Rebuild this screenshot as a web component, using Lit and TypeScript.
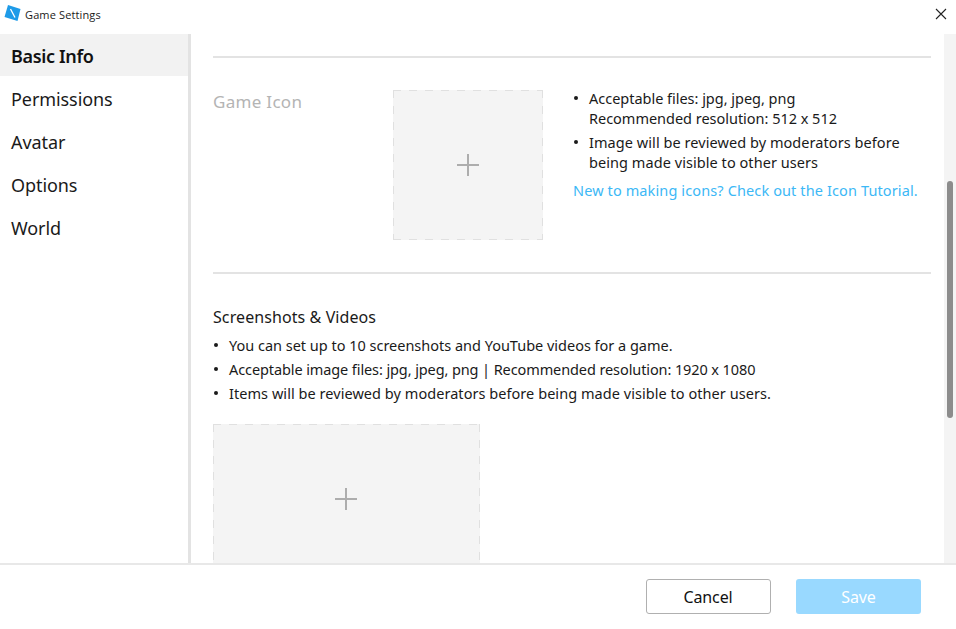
import { LitElement, html, css } from "lit";
import { customElement } from "lit/decorators.js";

const plus = html`<svg class="plus" width="22" height="22" viewBox="0 0 22 22"><path d="M0 10h22v2H0zM10 0h2v22h-2z" fill="#adadad"/></svg>`;

@customElement("app-root")
export class AppRoot extends LitElement {
  static styles = css`
    :host { display: block; width: 956px; height: 629px; background: #fff; overflow: hidden; font-family: "Noto Sans", "Open Sans", sans-serif; color: #1a1a1a; }
    .window { display: flex; flex-direction: column; height: 629px; }
    .titlebar { height: 34px; flex: none; display: flex; align-items: center; padding: 0 9px 5px 4px; box-sizing: border-box; }
    .logo { width: 17px; height: 17px; flex: none; margin-bottom: 2px; }
    .title { font-size: 11px; margin-left: 4px; flex: 1; font-family: "Open Sans", sans-serif; letter-spacing: 0.13px; }
    .close { width: 12px; height: 12px; display: block; margin-bottom: 1px; }
    .body { flex: 1; display: flex; min-height: 0; }
    .side { width: 191px; flex: none; box-sizing: border-box; border-right: 3px solid #e3e3e3; }
    .nav { height: 43px; box-sizing: border-box; display: flex; align-items: center; padding: 2px 0 0 11px; font-size: 18px; letter-spacing: -0.08px; }
    .nav.sel { background: #f2f2f2; font-weight: 600; height: 42px; color: #111; letter-spacing: -0.35px; }
    .main { flex: 1; padding: 22px 13px 0 22px; overflow: hidden; min-width: 0; }
    .rule { height: 2px; background: #e3e3e3; }
    .icon-row { display: flex; height: 214px; }
    .label { width: 180px; flex: none; font-size: 17px; color: #b4b4b4; padding-top: 32px; line-height: 24px; letter-spacing: 0.3px; }
    .drop {
      flex: none; box-sizing: border-box; display: flex; align-items: center; justify-content: center;
      background-color: #f4f4f4;
      background-image:
        repeating-linear-gradient(90deg, #e0e0e0 0 8px, transparent 8px 16px),
        repeating-linear-gradient(90deg, #e0e0e0 0 8px, transparent 8px 16px),
        repeating-linear-gradient(180deg, #e0e0e0 0 8px, transparent 8px 16px),
        repeating-linear-gradient(180deg, #e0e0e0 0 8px, transparent 8px 16px);
      background-size: 100% 1px, 100% 1px, 1px 100%, 1px 100%;
      background-position: 0 0, 0 100%, 0 0, 100% 0;
      background-repeat: no-repeat;
    }
    .icon-drop { width: 150px; height: 150px; margin-top: 32px; }
    .notes { margin-left: 30px; padding-top: 30px; font-size: 14.5px; line-height: 20px; letter-spacing: 0.06px; }
    ul { list-style: none; margin: 0; padding: 0; }
    li { position: relative; padding-left: 16px; }
    li::before { content: ""; position: absolute; left: 1px; top: 10px; width: 4px; height: 4px; border-radius: 50%; background: #1a1a1a; }
    .notes li::before { top: 8px; }
    .notes li + li { margin-top: 4px; }
    .notes li.files { letter-spacing: -0.02px; }
    .link { color: #3cb8f6; margin-top: 8px; white-space: nowrap; letter-spacing: 0.12px; }
    h2 { margin: 0; font-weight: 400; font-size: 16px; line-height: 24px; padding-top: 31px; letter-spacing: 0.09px; }
    .shots { font-size: 14.5px; line-height: 24px; margin-top: 4px; }
    .s1 { letter-spacing: -0.01px; }
    .s2 { letter-spacing: -0.1px; }
    .s3 { letter-spacing: 0.05px; }
    .shot-drop { width: 267px; height: 150px; margin-top: 19px; padding-right: 1px; }
    .track { width: 12px; flex: none; background: #f4f4f4; padding: 147px 3px 0; box-sizing: border-box; }
    .thumb { height: 237px; border-radius: 3px; background: #8c8c8c; }
    .footer { height: 66px; flex: none; box-sizing: border-box; border-top: 2px solid #e8e8e8; display: flex; justify-content: flex-end; align-items: flex-start; gap: 25px; padding: 14px 35px 0 0; }
    .btn { width: 125px; height: 35px; box-sizing: border-box; border-radius: 3px; display: flex; align-items: center; justify-content: center; font-size: 16px; letter-spacing: -0.1px; }
    .cancel { border: 1px solid #b0b0b0; color: #111; background: #fff; padding-right: 1px; }
    .save { background: #99d9ff; color: #fff; }
  `;

  render() {
    return html`<div class="window">
      <div class="titlebar">
        <svg class="logo" viewBox="0 0 17 17"><path d="M4 0 16.5 4 13.5 16 .5 12Z" fill="#1e9be8"/><path d="M6.5 4 11 12.5" stroke="#fff" stroke-width="1.3"/></svg>
        <span class="title">Game Settings</span>
        <svg class="close" viewBox="0 0 12 12"><path d="M1 1l10 10M11 1 1 11" stroke="#222" stroke-width="1.1" fill="none"/></svg>
      </div>
      <div class="body">
        <nav class="side">
          <div class="nav sel">Basic Info</div>
          <div class="nav">Permissions</div>
          <div class="nav">Avatar</div>
          <div class="nav">Options</div>
          <div class="nav">World</div>
        </nav>
        <main class="main">
          <div class="rule"></div>
          <section class="icon-row">
            <div class="label">Game Icon</div>
            <div class="drop icon-drop">${plus}</div>
            <div class="notes">
              <ul>
                <li class="files">Acceptable files: jpg, jpeg, png<br />Recommended resolution: 512 x 512</li>
                <li>Image will be reviewed by moderators before<br />being made visible to other users</li>
              </ul>
              <div class="link">New to making icons? Check out the Icon Tutorial.</div>
            </div>
          </section>
          <div class="rule"></div>
          <h2>Screenshots &amp; Videos</h2>
          <ul class="shots">
            <li class="s1">You can set up to 10 screenshots and YouTube videos for a game.</li>
            <li class="s2">Acceptable image files: jpg, jpeg, png | Recommended resolution: 1920 x 1080</li>
            <li class="s3">Items will be reviewed by moderators before being made visible to other users.</li>
          </ul>
          <div class="drop shot-drop">${plus}</div>
        </main>
        <div class="track"><div class="thumb"></div></div>
      </div>
      <footer class="footer">
        <div class="btn cancel">Cancel</div>
        <div class="btn save">Save</div>
      </footer>
    </div>`;
  }
}
